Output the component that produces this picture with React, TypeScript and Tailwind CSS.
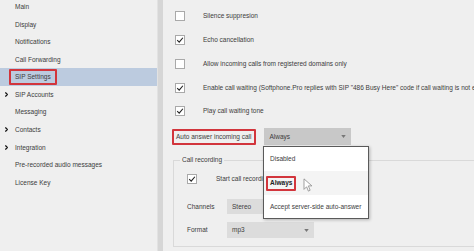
import { ChevronRight } from 'lucide-react';

const navItems = [
  { label: 'Main' },
  { label: 'Display' },
  { label: 'Notifications' },
  { label: 'Call Forwarding' },
  { label: 'SIP Settings', selected: true },
  { label: 'SIP Accounts', expandable: true },
  { label: 'Messaging' },
  { label: 'Contacts', expandable: true },
  { label: 'Integration', expandable: true },
  { label: 'Pre-recorded audio messages' },
  { label: 'License Key' },
];

const options = [
  { label: 'Silence suppresion', checked: false },
  { label: 'Echo cancellation', checked: true },
  { label: 'Allow incoming calls from registered domains only', checked: false },
  {
    label: 'Enable call waiting (Softphone.Pro replies with SIP "486 Busy Here" code if call waiting is not enabled)',
    checked: true,
  },
  { label: 'Play call waiting tone', checked: true, short: true },
];

function Checkbox({ checked }: { checked: boolean }) {
  return (
    <div className="w-[10px] h-[10px] shrink-0 bg-white border border-[#a9a9a9] flex items-center justify-center">
      {checked && (
        <svg viewBox="0 0 10 10" className="w-[8px] h-[8px]">
          <path d="M1.5 5.2 L4 7.6 L8.6 2.2" fill="none" stroke="#222" strokeWidth="1.4" />
        </svg>
      )}
    </div>
  );
}

function Caret() {
  return (
    <svg viewBox="0 0 6 4" className="w-[5px] h-[3px]">
      <path d="M0 0 L6 0 L3 4 Z" fill="#777" />
    </svg>
  );
}

export default function App() {
  return (
    <div
      className="relative w-[474px] h-[251px] overflow-hidden flex bg-[#efefef] text-[6.5px] text-[#3c3c3c]"
      style={{ fontFamily: '"Liberation Sans", Arial, sans-serif' }}
    >
      {/* sidebar */}
      <div className="w-[157px] shrink-0 bg-[#efefef]">
        <div className="-mt-[2px]">
          {navItems.map((item) => (
            <div
              key={item.label}
              className={`h-[17.6px] flex items-center relative ${item.selected ? 'bg-[#bccbdf]' : ''}`}
            >
              {item.expandable && (
                <ChevronRight className="absolute left-[3px] w-[7px] h-[7px] text-[#111]" strokeWidth={4} />
              )}
              {item.selected ? (
                <span className="ml-[9px] h-[16px] px-[4px] flex items-center border-2 border-[#d2353c] rounded-[1px]">
                  {item.label}
                </span>
              ) : (
                <span className="ml-[15px]">{item.label}</span>
              )}
            </div>
          ))}
        </div>
      </div>

      {/* splitter */}
      <div className="w-[6px] shrink-0 bg-[#d6d6d6] border-l border-[#e2e2e2]" />

      {/* content */}
      <div className="flex-1 min-w-0 pt-[4px]">
        {options.map((opt) => (
          <div
            key={opt.label}
            className={`${opt.short ? 'h-[22px]' : 'h-[24px]'} flex items-center pl-[12px] whitespace-nowrap`}
          >
            <Checkbox checked={opt.checked} />
            <span className="ml-[18px]">{opt.label}</span>
          </div>
        ))}

        <div className="mt-[6px] h-[17px] flex items-center pl-[9px]">
          <span className="h-[16px] flex items-center px-[2px] border-2 border-[#d2353c] rounded-[1px] whitespace-nowrap">
            Auto answer incoming call
          </span>
          <div className="ml-[8px] w-[87px] h-[17px] bg-[#c8c8c8] flex items-center justify-between pl-[6px] pr-[5px]">
            <span>Always</span>
            <Caret />
          </div>
        </div>

        <fieldset className="mt-[10px] ml-[10px] -mr-[20px] border border-[#d9d9d9] pl-[13px] pb-[8px]">
          <legend className="-ml-[7px] px-[2px] leading-[10px]">Call recording</legend>
          <div className="mt-[6px] h-[16px] flex items-center">
            <Checkbox checked />
            <span className="ml-[19px] whitespace-nowrap">Start call recording automatically</span>
          </div>
          <div className="mt-[12px] h-[15px] flex items-center">
            <span className="w-[40px]">Channels</span>
            <div className="w-[87px] h-[15px] bg-[#dcdcdc] flex items-center justify-between pl-[5px] pr-[5px]">
              <span>Stereo</span>
              <Caret />
            </div>
          </div>
          <div className="mt-[8px] h-[16px] flex items-center">
            <span className="w-[40px]">Format</span>
            <div className="w-[87px] h-[16px] bg-[#dcdcdc] flex items-center justify-between pl-[5px] pr-[5px]">
              <span>mp3</span>
              <Caret />
            </div>
          </div>
        </fieldset>
      </div>

      {/* dropdown popup */}
      <div className="absolute left-[263px] top-[146px] w-[106px] bg-white border border-[#5a5a5a] shadow-[1px_1px_3px_rgba(0,0,0,0.25)]">
        <div className="h-[24px] flex items-center pl-[6px]">Disabled</div>
        <div className="h-[24px] flex items-center pl-[2px] bg-[#f4f4f4]">
          <span className="h-[15px] flex items-center px-[2px] border-2 border-[#d2353c] rounded-[1px] font-bold text-[#222]">
            Always
          </span>
        </div>
        <div className="h-[23px] flex items-center pl-[6px] whitespace-nowrap">Accept server-side auto-answer</div>
      </div>

      {/* mouse cursor */}
      <svg viewBox="0 0 10 16" className="absolute left-[303px] top-[178px] w-[9px] h-[14px]">
        <path d="M1 1 L1 13 L4 10 L6 15 L8 14 L6 9 L10 9 Z" fill="#fff" stroke="#888" strokeWidth="0.9" strokeLinejoin="round" />
      </svg>
    </div>
  );
}
